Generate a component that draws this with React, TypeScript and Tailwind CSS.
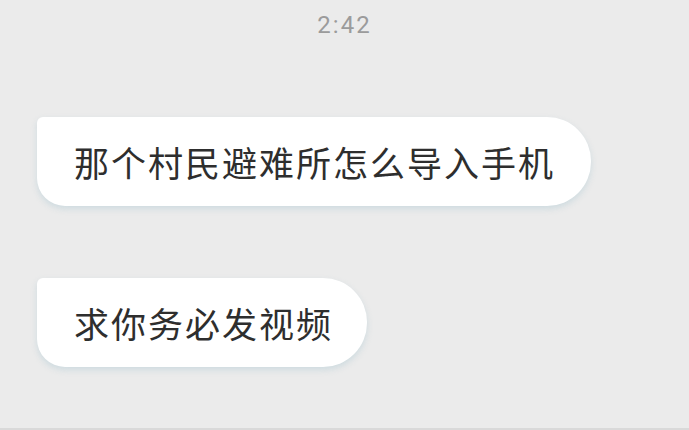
export default function App() {
  return (
    <div className="flex h-[430px] w-[689px] flex-col overflow-hidden bg-[#ebebeb] font-['Noto_Sans_CJK_SC',sans-serif]">
      <div className="flex flex-1 flex-col">
        <div className="flex justify-center pt-[11px]">
          <span className="font-['Roboto',sans-serif] text-[24px] leading-[28px] tracking-[2px] text-[#9b9b9b]">2:42</span>
        </div>
        <div className="mt-[78px] flex flex-col items-start gap-[72px] pl-[37px]">
          <div className="flex h-[89px] items-center rounded-tl-[6px] rounded-tr-[44px] rounded-br-[44px] rounded-bl-[28px] bg-white pl-[37px] pr-[36px] shadow-[0_3px_6px_rgba(170,200,210,0.45)]">
            <span className="text-[35px] leading-none tracking-[2px] text-[#2e2e2e]">那个村民避难所怎么导入手机</span>
          </div>
          <div className="flex h-[89px] items-center rounded-tl-[6px] rounded-tr-[44px] rounded-br-[44px] rounded-bl-[28px] bg-white pl-[37px] pr-[34px] shadow-[0_3px_6px_rgba(170,200,210,0.45)]">
            <span className="text-[35px] leading-none tracking-[2px] text-[#2e2e2e]">求你务必发视频</span>
          </div>
        </div>
      </div>
      <div className="h-[2px] bg-[#d9d9d9]" />
    </div>
  );
}
